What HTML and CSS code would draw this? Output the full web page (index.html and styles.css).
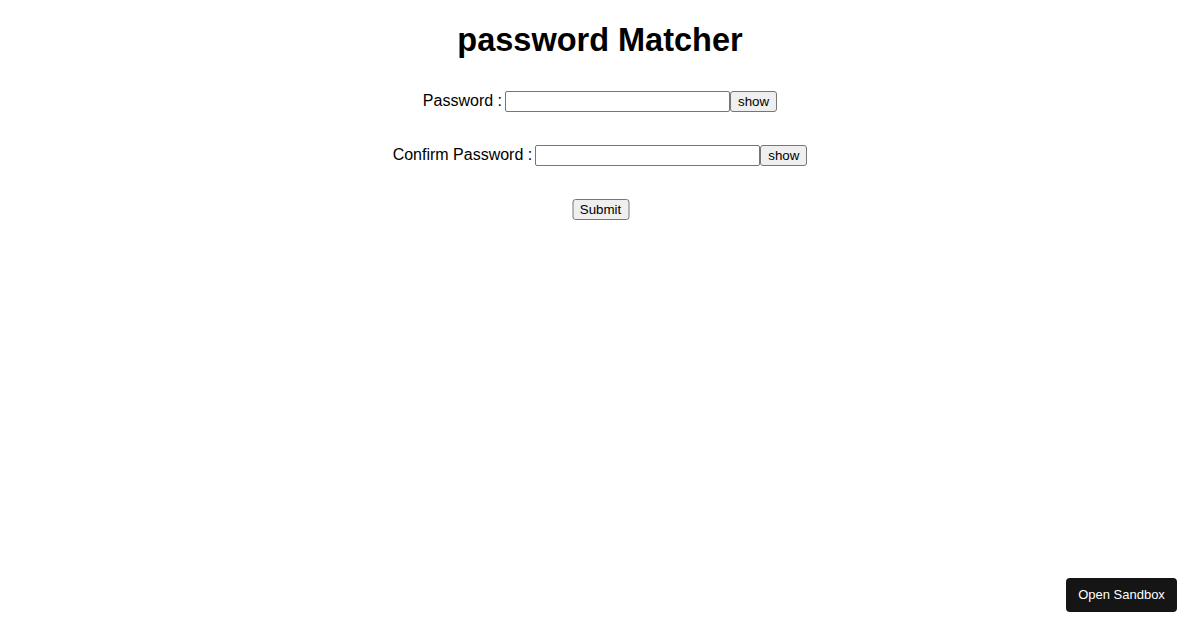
FILE: index.html
```html
<!DOCTYPE html>
<html>
<head>
<meta charset="utf-8">
<link rel="stylesheet" href="styles.css">
</head>
<body>
<h1 class="title">password Matcher</h1>
<div class="row"><label class="lbl">Password :</label><input class="field" type="password"><button class="btn">show</button></div>
<div class="row"><label class="lbl">Confirm Password :</label><input class="field" type="password"><button class="btn">show</button></div>
<div class="row"><button class="btn submit">Submit</button></div>
<a class="sandbox">Open Sandbox</a>
</body>
</html>
```
FILE: styles.css
```css
body {
  margin: 0;
  font-family: "Liberation Sans", Arial, sans-serif;
  color: #000;
  background: #fff;
}
.title {
  font-size: 32.5px;
  font-weight: bold;
  text-align: center;
  margin: 22px 0 0;
  line-height: 37px;
}
.row {
  display: flex;
  justify-content: center;
  align-items: center;
  height: 22px;
  margin-top: 32px;
}
.title + .row { margin-top: 31px; }
.lbl {
  font-size: 16px;
  margin-right: 3px;
}
.field {
  box-sizing: border-box;
  width: 225px;
  height: 21px;
  border: 1px solid #767676;
  border-radius: 2px;
  padding: 1px 2px;
  margin: 0;
  background: #fff;
}
.btn {
  box-sizing: border-box;
  height: 21px;
  font-family: "Liberation Sans", Arial, sans-serif;
  font-size: 13.33px;
  padding: 1px 7px;
  margin: 0;
  border: 1px solid #767676;
  border-radius: 3px;
  background: #efefef;
  color: #000;
}
.submit {
  width: 57px;
  padding: 1px 0;
  transform: translateX(0.5px);
}
.sandbox {
  position: fixed;
  right: 23px;
  bottom: 18px;
  width: 111px;
  height: 34px;
  box-sizing: border-box;
  display: flex;
  align-items: center;
  justify-content: center;
  padding-bottom: 1px;
  background: #151515;
  color: #fff;
  font-size: 13px;
  border-radius: 4px;
}
```
